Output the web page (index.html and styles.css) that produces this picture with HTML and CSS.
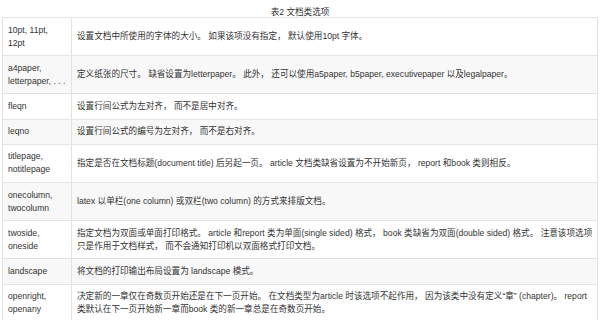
FILE: index.html
```html
<!DOCTYPE html>
<html lang="zh">
<head>
<meta charset="utf-8">
<link rel="stylesheet" href="styles.css">
</head>
<body>
<div class="page">
  <div class="caption">表2 文档类选项</div>
  <table class="opts">
    <colgroup><col class="c1"><col class="c2"></colgroup>
    <tbody>
      <tr><td>10pt, 11pt,<br>12pt</td><td>设置文档中所使用的字体的大小。 如果该项没有指定， 默认使用10pt 字体。</td></tr>
      <tr><td>a4paper,<br>letterpaper, . . .</td><td>定义纸张的尺寸。 缺省设置为letterpaper。 此外， 还可以使用a5paper, b5paper, executivepaper 以及legalpaper。</td></tr>
      <tr><td>fleqn</td><td>设置行间公式为左对齐， 而不是居中对齐。</td></tr>
      <tr><td>leqno</td><td>设置行间公式的编号为左对齐， 而不是右对齐。</td></tr>
      <tr><td>titlepage,<br>notitlepage</td><td>指定是否在文档标题(document title) 后另起一页。 article 文档类缺省设置为不开始新页， report 和book 类则相反。</td></tr>
      <tr><td>onecolumn,<br>twocolumn</td><td>latex 以单栏(one column) 或双栏(two column) 的方式来排版文档。</td></tr>
      <tr><td>twoside,<br>oneside</td><td><span class="ln">指定文档为双面或单面打印格式。 article 和report 类为单面(single sided) 格式， book 类缺省为双面(double sided) 格式。 注意该项选项</span><br>只是作用于文档样式， 而不会通知打印机以双面格式打印文档。</td></tr>
      <tr><td>landscape</td><td>将文档的打印输出布局设置为 landscape 模式。</td></tr>
      <tr><td>openright,<br>openany</td><td><span class="ln">决定新的一章仅在奇数页开始还是在下一页开始。 在文档类型为article 时该选项不起作用， 因为该类中没有定义“章” (chapter)。 report</span><br>类默认在下一页开始新一章而book 类的新一章总是在奇数页开始。</td></tr>
    </tbody>
  </table>
</div>
</body>
</html>
```
FILE: styles.css
```css
html, body {
  margin: 0;
  padding: 0;
  background: #ffffff;
}
.page {
  padding: 7px 2px 0 2px;
  font-family: "Liberation Sans", "Noto Sans CJK SC", sans-serif;
  font-size: 8.6px;
  color: #333333;
}
.caption {
  text-align: center;
  line-height: 10px;
  color: #333333;
}
.opts {
  width: 596px;
  border-collapse: collapse;
  table-layout: fixed;
}
.c1 { width: 69px; }
.opts td {
  border: 1px solid #e3e3e3;
  padding: 5.6px 3px 5.6px 5px;
  line-height: 13px;
  vertical-align: middle;
}
.opts td:first-child {
  white-space: nowrap;
}
.ln {
  white-space: nowrap;
}
.opts tr:nth-child(even) td {
  background: #f8f8f8;
}
```
